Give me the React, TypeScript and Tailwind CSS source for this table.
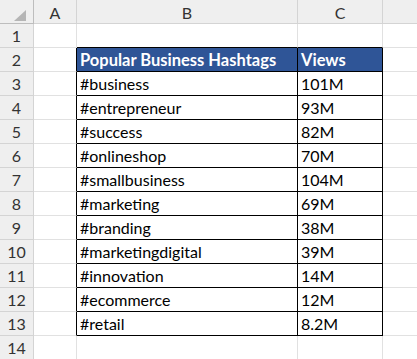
import React from "react";

const rows: [string, string][] = [
  ["#business", "101M"],
  ["#entrepreneur", "93M"],
  ["#success", "82M"],
  ["#onlineshop", "70M"],
  ["#smallbusiness", "104M"],
  ["#marketing", "69M"],
  ["#branding", "38M"],
  ["#marketingdigital", "39M"],
  ["#innovation", "14M"],
  ["#ecommerce", "12M"],
  ["#retail", "8.2M"],
];

const font = { fontFamily: "Lato, 'Liberation Sans', sans-serif" };

function ColHead({ label }: { label: string }) {
  return (
    <div className="h-6 bg-[#efefef] border-r border-b border-[#d4d4d4] flex items-end justify-center pb-[2px] text-[16px] text-[#333]">
      {label}
    </div>
  );
}

export default function App() {
  return (
    <div
      className="w-[417px] h-[359px] overflow-hidden bg-white text-[16px] leading-none"
      style={font}
    >
      <div className="grid grid-cols-[34px_43px_221px_85px_1fr]">
        {/* column header row */}
        <div className="h-6 bg-[#efefef] border-r border-b border-[#bdbdbd] relative">
          <svg
            className="absolute left-[14px] top-[10px]"
            width="12"
            height="11"
            viewBox="0 0 12 11"
          >
            <polygon points="12,0 12,11 0,11" fill="#b5b5b5" />
          </svg>
        </div>
        <ColHead label="A" />
        <ColHead label="B" />
        <ColHead label="C" />
        <div className="h-6 bg-[#efefef] border-b border-[#d4d4d4]" />

        {Array.from({ length: 14 }, (_, i) => {
          const r = i + 1;
          const inTable = r >= 2 && r <= 13;
          const isHead = r === 2;
          const data = r >= 3 && r <= 13 ? rows[r - 3] : null;
          const aboveTable = r === 1;
          return (
            <React.Fragment key={r}>
              <div className="h-6 bg-[#efefef] border-r border-b border-[#d4d4d4] flex items-end justify-center pb-[3px] text-[#333]">
                {r}
              </div>
              <div
                className={`h-6 border-b border-r border-b-[#e1e1e1] ${
                  inTable ? "border-r-black" : "border-r-[#e1e1e1]"
                }`}
              />
              <div
                className={`h-6 border-r border-b flex items-end pl-[3px] pb-[3px] ${
                  inTable || aboveTable ? "border-b-black" : "border-b-[#e1e1e1]"
                } ${inTable ? "border-r-black" : "border-r-[#e1e1e1]"} ${
                  isHead ? "bg-[#2f5597] text-white font-bold text-[16.5px]" : "text-black"
                }`}
              >
                {isHead ? "Popular Business Hashtags" : data ? data[0] : ""}
              </div>
              <div
                className={`h-6 border-r border-b flex items-end pl-[3px] pb-[3px] ${
                  inTable || aboveTable ? "border-b-black" : "border-b-[#e1e1e1]"
                } ${inTable ? "border-r-black" : "border-r-[#e1e1e1]"} ${
                  isHead ? "bg-[#2f5597] text-white font-bold text-[16.5px]" : "text-black"
                }`}
              >
                {isHead ? "Views" : data ? data[1] : ""}
              </div>
              <div className="h-6 border-b border-[#e1e1e1]" />
            </React.Fragment>
          );
        })}
      </div>
    </div>
  );
}
